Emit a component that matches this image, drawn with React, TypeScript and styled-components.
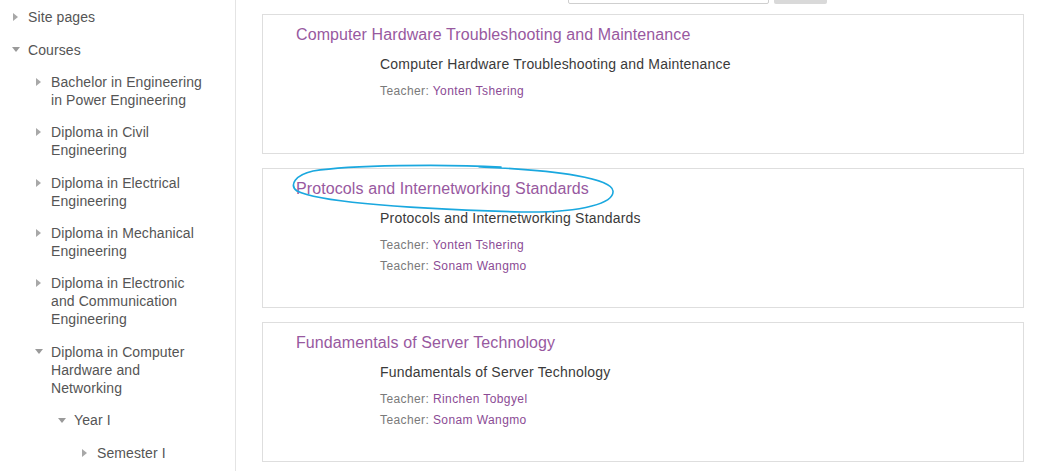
import styled, { createGlobalStyle } from "styled-components";

const GlobalStyle = createGlobalStyle`
  html, body {
    margin: 0;
    padding: 0;
    background: #fff;
    font-family: "Liberation Sans", Arial, sans-serif;
  }
  ul {
    list-style: none;
    margin: 0;
    padding: 0;
  }
`;

const Layout = styled.div`
  display: flex;
  min-height: 100vh;
  overflow: hidden;
`;

const Sidebar = styled.nav`
  width: 236px;
  flex-shrink: 0;
  box-sizing: border-box;
  padding: 1px 28px 0 13px;
  border-right: 1px solid #e4e4e4;
  font-size: 14px;
  line-height: 18px;
  color: #555;
`;

const Branch = styled.ul<{ nested?: boolean }>`
  padding-left: ${({ nested }) => (nested ? "23px" : "0")};
`;

const NodeRow = styled.div`
  display: flex;
  align-items: flex-start;
  padding: 7.2px 0;
  letter-spacing: 0.1px;
`;

const Toggle = styled.span`
  width: 15px;
  height: 18px;
  flex-shrink: 0;
  display: flex;
  align-items: center;
`;

const Arrow = styled.span<{ open?: boolean }>`
  width: 0;
  height: 0;
  ${({ open }) =>
    open
      ? `border-top: 5px solid #9a9a9a;
      border-left: 4px solid transparent;
      border-right: 4px solid transparent;
      margin-left: -1px;`
      : `border-left: 5px solid #a8a8a8;
      border-top: 4px solid transparent;
      border-bottom: 4px solid transparent;`}
`;

const NodeLabel = styled.span`
  flex: 1;
`;

const Main = styled.main`
  flex: 1;
  padding: 0 14px 0 26px;
`;

const SearchRow = styled.div`
  display: flex;
  gap: 5px;
  margin-top: -26px;
  padding-left: 306px;
  margin-bottom: 10px;
`;

const SearchInput = styled.div`
  width: 201px;
  height: 30px;
  box-sizing: border-box;
  border: 1px solid #cfcfcf;
  border-radius: 2px;
  background: #fff;
`;

const SearchButton = styled.div`
  width: 53px;
  height: 30px;
  background: #d9d9d9;
  border-radius: 2px;
`;

const CourseList = styled.div`
  display: flex;
  flex-direction: column;
  gap: 14px;
`;

const Card = styled.div`
  position: relative;
  height: 140px;
  box-sizing: border-box;
  border: 1px solid #dedede;
  padding: 10px 33px 0 33px;
`;

const CourseTitle = styled.a`
  display: block;
  font-size: 16px;
  line-height: 20px;
  letter-spacing: 0.1px;
  color: #98599f;
  text-decoration: none;
`;

const Summary = styled.div`
  margin: 9px 0 7px 84px;
  font-size: 14px;
  line-height: 20px;
  letter-spacing: 0.2px;
  color: #3a3a3a;
`;

const TeacherLine = styled.div`
  margin-left: 84px;
  font-size: 12px;
  line-height: 21px;
  letter-spacing: 0.4px;
  color: #7a7a7a;
`;

const TeacherName = styled.a`
  color: #8b4b95;
  text-decoration: none;
`;

const Scribble = styled.svg`
  position: absolute;
  left: 28px;
  top: -8px;
  overflow: visible;
  pointer-events: none;
`;

type TreeNode = { label: string; open?: boolean; children?: TreeNode[] };

const tree: TreeNode[] = [
  { label: "Site pages" },
  {
    label: "Courses",
    open: true,
    children: [
      { label: "Bachelor in Engineering in Power Engineering" },
      { label: "Diploma in Civil Engineering" },
      { label: "Diploma in Electrical Engineering" },
      { label: "Diploma in Mechanical Engineering" },
      { label: "Diploma in Electronic and Communication Engineering" },
      {
        label: "Diploma in Computer Hardware and Networking",
        open: true,
        children: [
          {
            label: "Year I",
            open: true,
            children: [{ label: "Semester I" }],
          },
        ],
      },
    ],
  },
];

const courses = [
  {
    title: "Computer Hardware Troubleshooting and Maintenance",
    teachers: ["Yonten Tshering"],
  },
  {
    title: "Protocols and Internetworking Standards",
    teachers: ["Yonten Tshering", "Sonam Wangmo"],
    circled: true,
  },
  {
    title: "Fundamentals of Server Technology",
    teachers: ["Rinchen Tobgyel", "Sonam Wangmo"],
  },
];

const Tree = ({ nodes, nested }: { nodes: TreeNode[]; nested?: boolean }) => (
  <Branch nested={nested}>
    {nodes.map((node) => (
      <li key={node.label}>
        <NodeRow>
          <Toggle>
            <Arrow open={node.open} />
          </Toggle>
          <NodeLabel>{node.label}</NodeLabel>
        </NodeRow>
        {node.children && <Tree nodes={node.children} nested />}
      </li>
    ))}
  </Branch>
);

const App = () => (
  <>
    <GlobalStyle />
    <Layout>
      <Sidebar>
        <Tree nodes={tree} />
      </Sidebar>
      <Main>
        <SearchRow>
          <SearchInput />
          <SearchButton />
        </SearchRow>
        <CourseList>
          {courses.map((course) => (
            <Card key={course.title}>
              <CourseTitle href="#">{course.title}</CourseTitle>
              <Summary>{course.title}</Summary>
              {course.teachers.map((name) => (
                <TeacherLine key={name}>
                  Teacher: <TeacherName href="#">{name}</TeacherName>
                </TeacherLine>
              ))}
              {course.circled && (
                <Scribble width="330" height="55" viewBox="290 160 330 55">
                  <path
                    d="M 500 166 C 440 163, 350 164, 312 170 C 294 174, 288 184, 296 190 C 320 202, 420 208, 520 211 C 585 212, 613 201, 612 190 C 611 178, 560 169, 478 166"
                    fill="none"
                    stroke="#1aa8df"
                    strokeWidth="1.6"
                    strokeLinecap="round"
                  />
                </Scribble>
              )}
            </Card>
          ))}
        </CourseList>
      </Main>
    </Layout>
  </>
);

export default App;
